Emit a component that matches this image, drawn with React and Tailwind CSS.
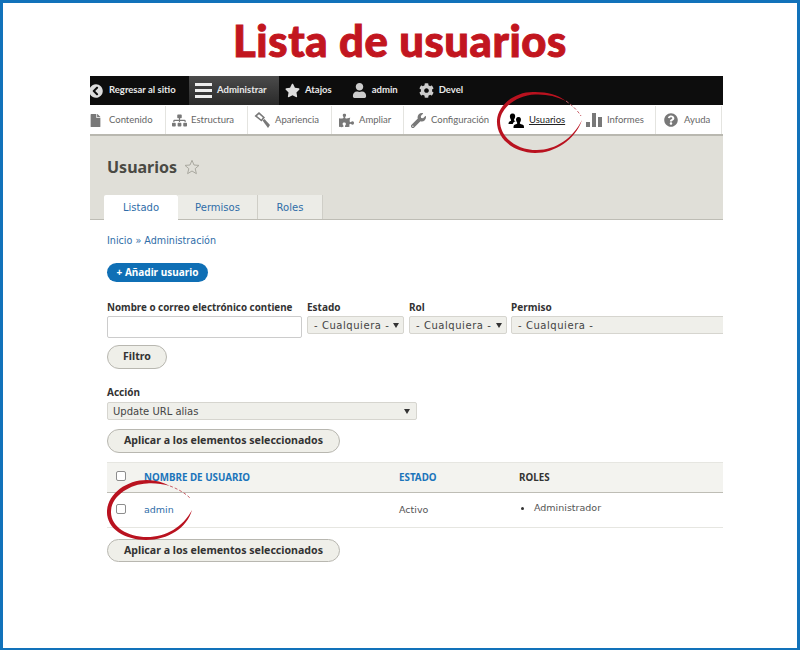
import React from "react";
import {
  FaChevronCircleLeft,
  FaStar,
  FaUser,
  FaCog,
  FaSitemap,
  FaPuzzlePiece,
  FaWrench,
  FaQuestionCircle,
  FaFile,
} from "react-icons/fa";

const body = "font-['DejaVu_Sans',sans-serif]";
const bar = "font-['Lato',sans-serif]";
const heavy = "font-['Noto_Sans',sans-serif] font-bold";

const Bars = () => (
  <svg width="17" height="15" viewBox="0 0 17 15" fill="#eee">
    <rect y="0" width="17" height="3" />
    <rect y="6" width="17" height="3" />
    <rect y="12" width="17" height="3" />
  </svg>
);

const Hammer = () => (
  <svg width="16" height="16" viewBox="0 0 16 16" fill="#787878">
    <path d="M5 0 L11 5.5 L7.5 9.5 L0.5 4 Z M5 2.2 L3 4 L7.3 7.4 L8.8 5.6 Z" fillRule="evenodd" />
    <path d="M8.5 8.5 L10.5 7 L16 13 L14 16 Z" />
  </svg>
);

const UsersIcon = () => (
  <svg width="16" height="15" viewBox="0 0 16 15" fill="#000">
    <path d="M4.5 0.5 C7 0.5 7.5 2.5 7 4.5 C6.7 5.7 6 6.3 6 7 C6 7.8 7 8 7.5 8.3 C5.5 9 5 10 4.8 11 L0.5 11 C0.5 9 1.5 8.3 3 7.8 C3.3 6.8 2.3 6 2 4.5 C1.6 2.5 2.2 0.5 4.5 0.5 Z" />
    <path d="M10.5 4 C12.8 4 13.3 6 12.8 7.8 C12.5 9 11.8 9.5 11.8 10.3 C11.8 11 14 11.3 15.5 12.3 C16 12.8 16 14 16 15 L5.5 15 C5.5 14 5.5 12.8 6 12.3 C7 11.3 9.3 11 9.3 10.3 C9.3 9.5 8.5 9 8.2 7.8 C7.7 6 8.2 4 10.5 4 Z" />
  </svg>
);

const Chart = () => (
  <svg width="16" height="14" viewBox="0 0 16 14" fill="#787878">
    <rect x="0" y="9" width="4" height="5" />
    <rect x="6" y="0" width="4" height="14" />
    <rect x="12" y="4" width="4" height="10" />
  </svg>
);

const NavItem = ({ icon, label, iconBox, gap, w, active, divider = true }) => (
  <div
    className={`flex items-center h-full shrink-0 ${divider ? "border-r border-[#e4e4e0]" : ""}`}
    style={{ width: w }}
  >
    <div className="flex justify-end shrink-0" style={{ width: iconBox, marginRight: gap }}>
      {icon}
    </div>
    <span className={`text-[9.5px] ${active ? "text-[#222] underline" : "text-[#666]"}`}>
      {label}
    </span>
  </div>
);

const Select = ({ label, w, arrow = true, ml }) => (
  <div className={`flex flex-col ${ml}`}>
    <span className={`text-[10px] text-[#333] h-[15px] leading-[13px] ${heavy}`}>{label}</span>
    <div
      className="h-[18px] flex items-center justify-between pl-[6px] pr-[4px] border border-[#d6d5cf] rounded-[2px] bg-[#efefea] text-[10px] tracking-[0.55px] text-[#444]"
      style={{ width: w }}
    >
      <span className="whitespace-nowrap">- Cualquiera -</span>
      {arrow && <span className="w-0 h-0 border-x-[3.5px] border-x-transparent border-t-[5px] border-t-[#333]" />}
    </div>
  </div>
);

const Btn = ({ children, className }) => (
  <div
    className={`flex items-center justify-center whitespace-nowrap rounded-full border border-[#b8b7b0] bg-[#efefe9] text-[10.6px] text-[#333] ${heavy} ${className}`}
  >
    {children}
  </div>
);

const Check = () => <div className="w-[10px] h-[10px] rounded-[2px] border border-[#8d8d8d] bg-white" />;

export default function App() {
  return (
    <div className="relative w-[800px] h-[650px] overflow-hidden bg-white border-x-[3px] border-t-[3px] border-b-[2px] border-[#1272ba]">
      <h1 className="h-[73px] pt-[12px] text-center text-[43.5px] leading-[50px] font-black tracking-[0.6px] text-[#c2161f] [-webkit-text-stroke:1px_#c2161f] font-['Lato',sans-serif]">
        Lista de usuarios
      </h1>

      <div className={`relative ml-[87px] w-[633px] overflow-hidden ${body}`}>
        {/* barra negra */}
        <div className={`flex items-center h-[29px] bg-[#0d0d0d] text-[9.5px] font-bold text-[#e8e8e8] ${bar}`}>
          <div className="flex items-center w-[99px] shrink-0">
            <FaChevronCircleLeft className="-ml-[1px] text-[14px] text-[#ddd]" />
            <span className="ml-[6px] whitespace-nowrap">Regresar al sitio</span>
          </div>
          <div className="flex items-center h-full w-[90px] shrink-0 pl-[6px] bg-gradient-to-b from-[#4b4b4b] to-[#2a2a2a]">
            <Bars />
            <span className="ml-[5px]">Administrar</span>
          </div>
          <div className="flex items-center ml-[6px]">
            <FaStar className="text-[15px] text-[#ddd]" />
            <span className="ml-[5px]">Atajos</span>
          </div>
          <div className="flex items-center ml-[20px]">
            <FaUser className="text-[15px] text-[#ccc]" />
            <span className="ml-[5px]">admin</span>
          </div>
          <div className="flex items-center ml-[21px]">
            <FaCog className="text-[15px] text-[#ccc]" />
            <span className="ml-[5px]">Devel</span>
          </div>
        </div>

        {/* menu */}
        <div className={`flex items-center h-[31px] pt-[1px] bg-white border-b-[2px] border-[#b9b8b0] ${bar}`}>
          <NavItem w={76} iconBox={11} gap={8} label="Contenido" icon={<FaFile className="text-[13px] text-[#787878]" />} />
          <NavItem w={82} iconBox={21} gap={4} label="Estructura" icon={<FaSitemap className="text-[15px] text-[#787878]" />} />
          <NavItem w={84} iconBox={22} gap={5} label="Apariencia" icon={<Hammer />} />
          <NavItem w={72} iconBox={22} gap={5} label="Ampliar" icon={<FaPuzzlePiece className="text-[15px] text-[#787878]" />} />
          <NavItem w={94} iconBox={22} gap={5} divider={false} label="Configuración" icon={<FaWrench className="text-[15px] text-[#787878]" />} />
          <NavItem w={84} iconBox={26} gap={5} divider={false} active label="Usuarios" icon={<UsersIcon />} />
          <NavItem w={74} iconBox={20} gap={5} label="Informes" icon={<Chart />} />
          <NavItem w={66} iconBox={22} gap={6} label="Ayuda" icon={<FaQuestionCircle className="text-[14px] text-[#787878]" />} />
        </div>

        {/* cabecera */}
        <div className="relative h-[84px] bg-[#e0dfd8] border-b border-[#bebdb5] pl-[17px]">
          <div className="flex items-center h-[59px] pt-[3px]">
            <span className={`text-[16px] text-[#4a4a44] ${heavy}`}>Usuarios</span>
            <svg className="ml-[7px]" width="16" height="16" viewBox="0 0 24 24" fill="none" stroke="#a9a89f" strokeWidth="1.5">
              <path d="M12 2 L15 9 L22.5 9.6 L16.8 14.5 L18.6 22 L12 18 L5.4 22 L7.2 14.5 L1.5 9.6 L9 9 Z" />
            </svg>
          </div>
          <div className="flex -ml-[3px] text-[10px] text-[#2f6da8]">
            <div className="relative z-10 w-[74px] h-[25px] flex items-center justify-center bg-white rounded-t-[2px]">Listado</div>
            <div className="w-[80px] h-[24px] flex items-center justify-center bg-[#ecece7] border-r border-[#cfcec7]">Permisos</div>
            <div className="w-[65px] h-[24px] flex items-center justify-center bg-[#ecece7] border-r border-[#cfcec7]">Roles</div>
          </div>
        </div>

        {/* contenido */}
        <div className="pl-[17px] bg-white">
          <div className="mt-[14px] h-[13px] leading-[13px] text-[9.6px] text-[#2f6da8]">Inicio » Administración</div>
          <div className={`mt-[16px] w-[101px] h-[19px] rounded-full bg-[#0f6fb5] flex items-center justify-center text-[10px] text-white ${heavy}`}>
            + Añadir usuario
          </div>

          <div className="flex mt-[19px]">
            <div className="flex flex-col w-[195px]">
              <span className={`text-[9.8px] text-[#333] h-[15px] leading-[13px] whitespace-nowrap ${heavy}`}>Nombre o correo electrónico contiene</span>
              <div className="w-[195px] h-[22px] border border-[#ccc] rounded-[2px] bg-white" />
            </div>
            <Select label="Estado" w={97} ml="ml-[5px]" />
            <Select label="Rol" w={98} ml="ml-[5px]" />
            <Select label="Permiso" w={240} ml="ml-[4px]" arrow={false} />
          </div>

          <Btn className="w-[60px] h-[24px] mt-[7px]">Filtro</Btn>

          <div className={`mt-[17px] h-[16px] text-[10px] text-[#333] leading-[13px] ${heavy}`}>Acción</div>
          <div className="w-[310px] h-[18px] flex items-center justify-between px-[5px] border border-[#d6d5cf] rounded-[2px] bg-[#efefea] text-[10px] text-[#444]">
            <span>Update URL alias</span>
            <span className="mr-[1px] w-0 h-0 border-x-[3.5px] border-x-transparent border-t-[5px] border-t-[#333]" />
          </div>
          <Btn className="w-[233px] h-[24px] mt-[9px]">Aplicar a los elementos seleccionados</Btn>

          {/* tabla */}
          <div className="mt-[9px] w-[616px]">
            <div className={`grid grid-cols-[37px_255px_120px_1fr] items-center h-[31px] pt-[1px] bg-[#f3f3ef] border-y border-t-[#e6e6e1] border-b-[#bebdb5] text-[9.8px] ${heavy}`}>
              <div className="pl-[9px] -mt-[5px]"><Check /></div>
              <span className="text-[#1b75bb]">NOMBRE DE USUARIO</span>
              <span className="text-[#1b75bb]">ESTADO</span>
              <span className="text-[#333]">ROLES</span>
            </div>
            <div className="grid grid-cols-[37px_255px_120px_1fr] items-center h-[35px] border-b border-[#e6e6e1] text-[9.5px] text-[#555]">
              <div className="pl-[9px] -mt-[3px]"><Check /></div>
              <span className="text-[#2f6da8]">admin</span>
              <span>Activo</span>
              <div className="flex items-center -mt-[3px]">
                <span className="w-[3px] h-[3px] rounded-full bg-[#333] ml-[2px] mr-[10px]" />
                Administrador
              </div>
            </div>
          </div>
          <Btn className="w-[233px] h-[23px] mt-[11px]">Aplicar a los elementos seleccionados</Btn>
        </div>
      </div>

      {/* círculos rojos encima */}
      <svg className="absolute left-[-3px] top-[-3px] pointer-events-none" width="800" height="650" fill="#b9121f">
        <path d="M582 120 C575 140 555 153 535 153 C512 152 496 138 497 120 C498 105 515 91 535 92 C548 92 558 95 566 101 C556 96 546 94 535 94.5 C518 95 501 107 500 121 C500 137 516 150 537 150 C556 150 573 138 582 120 Z" />
        <path d="M566 101 C573 106 578 111 581 116" fill="none" stroke="#c9616a" strokeWidth="1" strokeDasharray="3 2" />
        <path d="M192 510 C187 528 168 540 146 540 C124 540 106 528 107 511 C108 494 126 480 147 480 C155 480 163 482 170 486 C162 484 155 483 147 483.5 C130 484 111 496 111 512 C111 527 128 537 147 537 C166 537 183 527 192 510 Z" />
        <path d="M170 486 C178 489 185 493 190 498" fill="none" stroke="#c9616a" strokeWidth="1" strokeDasharray="3 2" />
      </svg>
    </div>
  );
}
